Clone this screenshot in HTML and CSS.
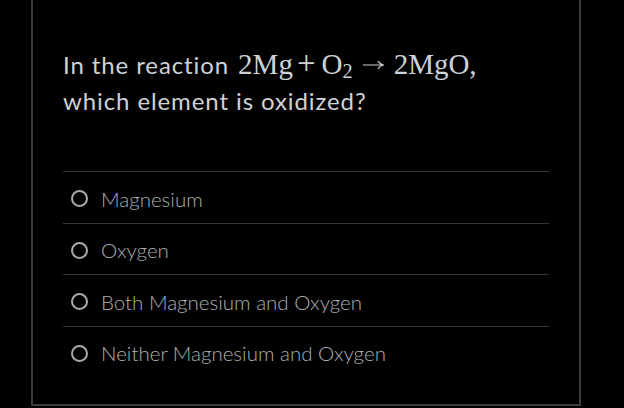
FILE: index.html
```html
<!DOCTYPE html>
<html>
<head>
<meta charset="utf-8">
<link rel="stylesheet" href="styles.css">
</head>
<body>
<div class="card">
  <p class="question">In the reaction <span class="math">2Mg<span class="op">+</span>O<sub>2</sub><svg class="arrow" width="21" height="10" viewBox="0 0 21 10"><path d="M0 5 H19.5 M15 1.2 C16.2 3 17.8 4.3 20.2 5 C17.8 5.7 16.2 7 15 8.8" fill="none" stroke="#cfd4d8" stroke-width="1.2"/></svg>2MgO,</span><br>which element is oxidized?</p>
  <ul class="options">
    <li class="option"><span class="radio"></span><span class="label">Magnesium</span></li>
    <li class="option"><span class="radio"></span><span class="label">Oxygen</span></li>
    <li class="option"><span class="radio"></span><span class="label">Both Magnesium and Oxygen</span></li>
    <li class="option"><span class="radio"></span><span class="label">Neither Magnesium and Oxygen</span></li>
  </ul>
</div>
</body>
</html>
```
FILE: styles.css
```css
html, body {
  margin: 0;
  padding: 0;
  background: #000;
}
body {
  width: 624px;
  height: 408px;
  overflow: hidden;
}
.card {
  box-sizing: border-box;
  margin-left: 31px;
  width: 550px;
  height: 406px;
  border: 2px solid #3c3c3c;
  border-top: 0;
  padding: 47px 30px 0 30px;
}
.question {
  margin: 0;
  font-family: Lato, "Noto Sans", sans-serif;
  font-size: 24px;
  line-height: 35.5px;
  color: #cdd2d6;
  letter-spacing: 0.9px;
}
.math {
  font-family: "Liberation Serif", "DejaVu Serif", serif;
  font-size: 29px;
  letter-spacing: 0;
  line-height: 1;
  margin-left: 2px;
}
.math sub {
  font-size: 0.7em;
  vertical-align: -0.18em;
  line-height: 0;
}
.op {
  font-size: 33px;
  line-height: 1;
  margin: 0 6px 0 4px;
}
.arrow {
  vertical-align: 4px;
  margin: 0 10px 0 10px;
}
.options {
  list-style: none;
  margin: 53px 0 0 0;
  padding: 0;
}
.option {
  display: flex;
  align-items: center;
  gap: 13px;
  height: 51.5px;
  box-sizing: border-box;
  border-top: 1px solid #353535;
  padding: 3px 0 0 8px;
  font-family: Lato, "Noto Sans", sans-serif;
  font-weight: 300;
  font-size: 20.5px;
  color: #acb0b3;
}
.radio {
  box-sizing: border-box;
  width: 17px;
  height: 17px;
  border: 2px solid #a8aaac;
  border-radius: 50%;
  flex: none;
}
```
